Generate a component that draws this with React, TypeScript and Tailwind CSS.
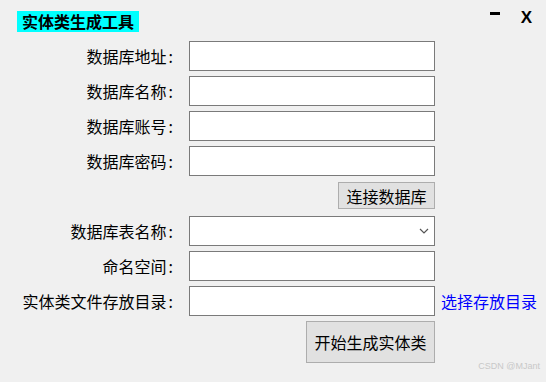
import React from "react";

const font = { fontFamily: '"Noto Sans CJK SC", "Noto Sans", sans-serif' };

function Row({ label, children }: { label: string; children: React.ReactNode }) {
  return (
    <div className="flex items-center h-[30px]">
      <div className="w-[175px] text-right text-[16px] leading-none text-black pr-[2px]">
        {label}
        <span className="ml-[2px]">:</span>
      </div>
      <div className="ml-[14px] flex items-center">{children}</div>
    </div>
  );
}

function Input() {
  return <div className="w-[246px] h-[30px] bg-white border border-[#7a7a7a]" />;
}

export default function App() {
  return (
    <div className="relative w-[546px] h-[382px] bg-[#f0f0f0] overflow-hidden" style={font}>
      <div className="flex items-start pt-[11px] pl-[17px]">
        <span className="h-[21px] leading-[21px] px-[5px] bg-[#00ffff] text-[16px] font-bold text-black">实体类生成工具</span>
        <div className="ml-auto flex items-start mr-[14px] mt-[-3px]">
          <div className="mt-[4px] w-[10px] h-[3px] bg-black" />
          <span className="ml-[21px] text-[17px] font-bold leading-[20px] text-black" style={{ fontFamily: '"Liberation Sans", sans-serif' }}>X</span>
        </div>
      </div>

      <div className="mt-[9px] flex flex-col">
        <div className="flex flex-col gap-[5px]">
          <Row label="数据库地址"><Input /></Row>
          <Row label="数据库名称"><Input /></Row>
          <Row label="数据库账号"><Input /></Row>
          <Row label="数据库密码"><Input /></Row>
        </div>
        <div className="flex mt-[6px]">
          <button className="ml-[338px] w-[97px] h-[27px] bg-[#e1e1e1] border border-[#adadad] text-[16px] leading-none text-black">连接数据库</button>
        </div>
        <div className="flex flex-col gap-[5px] mt-[7px]">
          <Row label="数据库表名称">
            <div className="w-[246px] h-[30px] bg-white border border-[#7a7a7a] flex items-center justify-end pr-[5px]">
              <svg width="10" height="6" viewBox="0 0 10 6" fill="none">
                <path d="M1 1l4 4 4-4" stroke="#555" strokeWidth="1.2" />
              </svg>
            </div>
          </Row>
          <Row label="命名空间"><Input /></Row>
          <Row label="实体类文件存放目录">
            <Input />
            <span className="ml-[6px] text-[16px] leading-none text-[#0000ff]">选择存放目录</span>
          </Row>
        </div>
        <div className="flex mt-[5px]">
          <button className="ml-[306px] w-[129px] h-[42px] bg-[#e1e1e1] border border-[#adadad] text-[16px] leading-none text-black">开始生成实体类</button>
        </div>
      </div>

      <div className="absolute right-[6px] bottom-[9px] text-[9px] text-[#c8c8c8]" style={{ fontFamily: '"Liberation Sans", sans-serif' }}>CSDN @MJant</div>
    </div>
  );
}
